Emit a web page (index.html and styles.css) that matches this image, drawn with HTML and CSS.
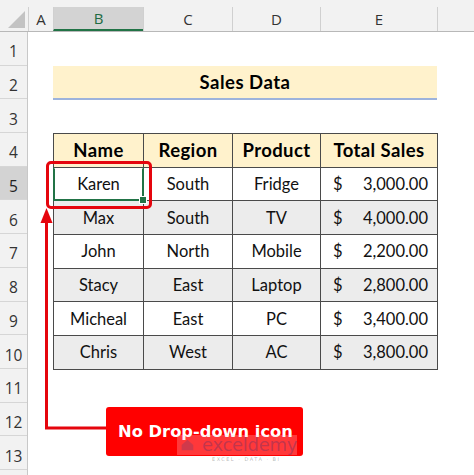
FILE: index.html
```html
<!DOCTYPE html>
<html>
<head>
<meta charset="utf-8">
<link rel="stylesheet" href="styles.css">
</head>
<body>
<div class="app">
  <div class="colhead">
    <div class="corner"><span class="tri"></span></div>
    <div class="ch w-a">A</div>
    <div class="ch w-b sel">B</div>
    <div class="ch w-c">C</div>
    <div class="ch w-d">D</div>
    <div class="ch w-e">E</div>
    <div class="ch w-f"></div>
  </div>
  <div class="body">
    <div class="rowhead">
      <div class="rh">1</div>
      <div class="rh">2</div>
      <div class="rh">3</div>
      <div class="rh">4</div>
      <div class="rh sel">5</div>
      <div class="rh">6</div>
      <div class="rh">7</div>
      <div class="rh">8</div>
      <div class="rh">9</div>
      <div class="rh">10</div>
      <div class="rh">11</div>
      <div class="rh">12</div>
      <div class="rh">13</div>
      <div class="rh"></div>
    </div>
    <div class="cells">
      <div class="title">Sales Data</div>
      <table class="data">
        <colgroup>
          <col class="c-b"><col class="c-c"><col class="c-d"><col class="c-e">
        </colgroup>
        <thead>
          <tr><th>Name</th><th>Region</th><th>Product</th><th>Total Sales</th></tr>
        </thead>
        <tbody>
          <tr><td class="selcell">Karen</td><td>South</td><td>Fridge</td><td class="money"><span>$</span><span>3,000.00</span></td></tr>
          <tr class="alt"><td>Max</td><td>South</td><td>TV</td><td class="money"><span>$</span><span>4,000.00</span></td></tr>
          <tr><td>John</td><td>North</td><td>Mobile</td><td class="money"><span>$</span><span>2,200.00</span></td></tr>
          <tr class="alt"><td>Stacy</td><td>East</td><td>Laptop</td><td class="money"><span>$</span><span>2,800.00</span></td></tr>
          <tr><td>Micheal</td><td>East</td><td>PC</td><td class="money"><span>$</span><span>3,400.00</span></td></tr>
          <tr class="alt"><td>Chris</td><td>West</td><td>AC</td><td class="money"><span>$</span><span>3,800.00</span></td></tr>
        </tbody>
      </table>
    </div>
  </div>

  <div class="hl-box"></div>
  <svg class="arrow" width="474" height="475" viewBox="0 0 474 475">
    <polyline points="107,428 46.5,428 46.5,220" fill="none" stroke="#e5050d" stroke-width="3"/>
    <polygon points="46.5,208 40.5,223 52.5,223" fill="#e5050d"/>
  </svg>
  <div class="label">No Drop-down icon</div>
  <div class="watermark">
    <svg class="wm-logo" width="20" height="18" viewBox="0 0 20 18">
      <path d="M1 9 L10 1 L19 9 L19 17 L1 17 Z" fill="rgba(120,60,110,0.35)"/>
    </svg>
    <span class="wm-text">exceldemy</span>
  </div>
  <div class="wm-sub">EXCEL · DATA · BI</div>
</div>
</body>
</html>
```
FILE: styles.css
```css
html, body {
  margin: 0;
  padding: 0;
  background: #ffffff;
  overflow: hidden;
}
.app {
  position: relative;
  width: 474px;
  height: 475px;
  overflow: hidden;
  font-family: Lato, "Liberation Sans", sans-serif;
  color: #111;
}
.colhead {
  display: flex;
  height: 32px;
  box-sizing: border-box;
  padding-top: 7px;
  background: #f2f2f2;
  border-bottom: 1px solid #b8b8b8;
  font-family: "Open Sans", "DejaVu Sans", sans-serif;
  font-size: 15px;
  color: #333;
}
.corner {
  width: 28px;
  flex: none;
  position: relative;
}
.tri {
  position: absolute;
  right: 3px;
  bottom: 3px;
  width: 0;
  height: 0;
  border-left: 17px solid transparent;
  border-bottom: 17px solid #c3c3c3;
}
.ch {
  flex: none;
  box-sizing: border-box;
  border-left: 1px solid #d0d0d0;
  display: flex;
  align-items: center;
  justify-content: center;
  line-height: 1;
}
.ch.sel {
  background: #d3d3d3;
  color: #1e6b43;
  border-bottom: 2px solid #217346;
}
.w-a { width: 25px; }
.w-b { width: 90px; }
.w-c { width: 89px; }
.w-d { width: 88px; }
.w-e { width: 117px; }
.w-f { flex: 1; }

.body {
  display: flex;
}
.rowhead {
  width: 28px;
  flex: none;
  background: #f2f2f2;
  border-right: 1px solid #c8c8c8;
  box-sizing: border-box;
  font-family: "Open Sans", "DejaVu Sans", sans-serif;
  font-size: 15.5px;
  color: #333;
}
.rh {
  height: 33.7px;
  box-sizing: border-box;
  border-bottom: 1px solid #d6d6d6;
  display: flex;
  align-items: center;
  justify-content: center;
  padding-top: 6px;
}
.rh.sel {
  background: #d3d3d3;
  color: #222;
}
.cells {
  flex: 1;
  padding-left: 25px;
}
.title {
  width: 384px;
  height: 34px;
  box-sizing: border-box;
  margin-top: 34px;
  background: #fff2cc;
  border-bottom: 2px solid #9db3dc;
  text-align: center;
  font-weight: 700;
  font-size: 18.5px;
  letter-spacing: 0.5px;
  line-height: 33px;
  color: #000;
}
.data {
  margin-top: 33px;
  border-collapse: collapse;
  table-layout: fixed;
  width: 384px;
  font-size: 16.5px;
}
.c-b { width: 90px; }
.c-c { width: 89px; }
.c-d { width: 88px; }
.c-e { width: 117px; }
.data th, .data td {
  border: 1px solid #4a4a4a;
  height: 33.7px;
  box-sizing: border-box;
  padding: 0;
  text-align: center;
  vertical-align: middle;
  color: #111;
}
.data th {
  background: #fff2cc;
  font-weight: 700;
  font-size: 18.5px;
  letter-spacing: 0.4px;
  color: #000;
}
.data tr.alt td {
  background: #ececec;
}
.data td.money {
  padding: 0 9px 0 12px;
}
.money {
  text-align: left;
}
.data td.money span:first-child {
  float: left;
}
.data td.money span:last-child {
  float: right;
}
.selcell {
  position: relative;
}
.selcell::after {
  content: "";
  position: absolute;
  left: -1px;
  top: -1px;
  right: -1px;
  bottom: -1px;
  border: 2px solid #217346;
  border-top-color: transparent;
  box-sizing: border-box;
}
.selcell::before {
  content: "";
  position: absolute;
  right: -4px;
  bottom: -4px;
  width: 6px;
  height: 6px;
  background: #217346;
  border: 1px solid #fff;
  z-index: 2;
}

.hl-box {
  position: absolute;
  left: 46px;
  top: 161px;
  width: 106px;
  height: 48px;
  box-sizing: border-box;
  border: 3.5px solid #e5050d;
  border-radius: 5px;
}
.arrow {
  position: absolute;
  left: 0;
  top: 0;
}
.label {
  position: absolute;
  left: 106px;
  top: 407px;
  width: 197px;
  height: 49px;
  background: #ff0000;
  border-radius: 3px;
  color: #fff;
  font-family: "DejaVu Sans", Verdana, sans-serif;
  font-weight: 700;
  font-size: 16.3px;
  line-height: 49px;
  text-align: center;
  padding-left: 2px;
  box-sizing: border-box;
}
.watermark {
  position: absolute;
  left: 177px;
  top: 435px;
  width: 120px;
  height: 20px;
  background: rgba(255, 200, 210, 0.28);
  display: flex;
  align-items: center;
  gap: 8px;
  padding-left: 4px;
  box-sizing: border-box;
}
.wm-text {
  font-family: "DejaVu Sans", sans-serif;
  font-size: 18px;
  color: rgba(120, 50, 100, 0.45);
  letter-spacing: -0.3px;
  line-height: 1;
}
.wm-sub {
  position: absolute;
  left: 212px;
  top: 456px;
  font-family: "DejaVu Sans", sans-serif;
  font-size: 5px;
  letter-spacing: 1.5px;
  color: rgba(90, 90, 90, 0.45);
}
```
